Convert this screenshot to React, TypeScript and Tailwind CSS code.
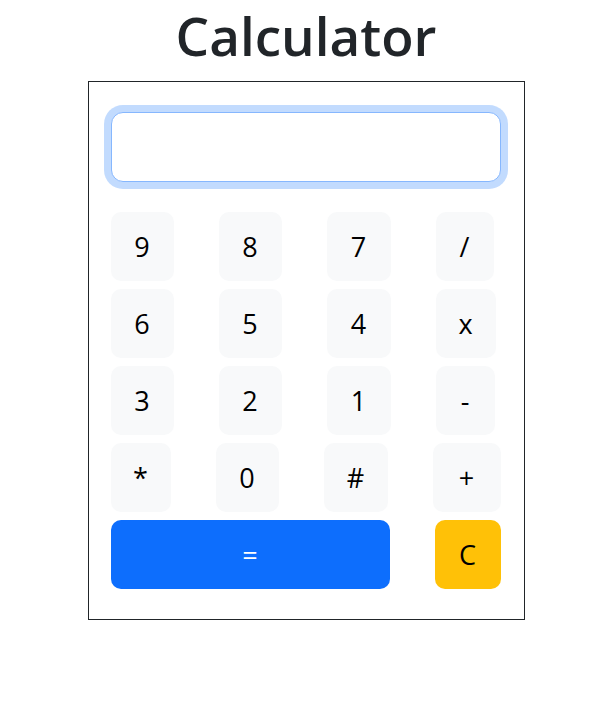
const rows: { label: string; ml: number; w: number; kind?: "blue" | "yellow" }[][] = [
  [
    { label: "9", ml: 0, w: 63 },
    { label: "8", ml: 45, w: 63 },
    { label: "7", ml: 45, w: 64 },
    { label: "/", ml: 45, w: 58 },
  ],
  [
    { label: "6", ml: 0, w: 63 },
    { label: "5", ml: 45, w: 63 },
    { label: "4", ml: 45, w: 64 },
    { label: "x", ml: 45, w: 60 },
  ],
  [
    { label: "3", ml: 0, w: 63 },
    { label: "2", ml: 45, w: 63 },
    { label: "1", ml: 45, w: 64 },
    { label: "-", ml: 45, w: 59 },
  ],
  [
    { label: "*", ml: 0, w: 60 },
    { label: "0", ml: 45, w: 63 },
    { label: "#", ml: 45, w: 64 },
    { label: "+", ml: 45, w: 68 },
  ],
  [
    { label: "=", ml: 0, w: 279, kind: "blue" },
    { label: "C", ml: 45, w: 66, kind: "yellow" },
  ],
];

const mlClass: Record<number, string> = {
  0: "ml-0",
  45: "ml-[45px]",
};

const wClass: Record<number, string> = {
  58: "w-[58px]",
  59: "w-[59px]",
  60: "w-[60px]",
  63: "w-[63px]",
  64: "w-[64px]",
  66: "w-[66px]",
  68: "w-[68px]",
  279: "w-[279px]",
};

export default function App() {
  return (
    <div className="flex min-h-[716px] flex-col items-center bg-white font-['Open_Sans',sans-serif]">
      <h1 className="mt-0 mb-[10px] text-[53px] font-semibold leading-[71px] text-[#212529]">
        Calculator
      </h1>
      <div className="w-[437px] border border-[#212529] px-[22px] pt-[30px] pb-[30px]">
        <input
          type="text"
          className="block h-[70px] w-[390px] rounded-[12px] border border-[#86b7fe] bg-white px-4 text-2xl shadow-[0_0_0_7px_rgba(13,110,253,0.25)] outline-none"
        />
        <div className="mt-[30px] flex flex-col gap-[8px]">
          {rows.map((row, i) => (
            <div key={i} className="flex">
              {row.map((b) => (
                <button
                  key={b.label}
                  className={[
                    "flex h-[69px] items-center justify-center rounded-[10px] pt-[2px] text-[27px]",
                    mlClass[b.ml],
                    wClass[b.w],
                    b.kind === "blue"
                      ? "bg-[#0d6efd] text-white"
                      : b.kind === "yellow"
                        ? "bg-[#ffc107] text-black"
                        : "bg-[#f8f9fa] text-black",
                  ].join(" ")}
                >
                  {b.label}
                </button>
              ))}
            </div>
          ))}
        </div>
      </div>
    </div>
  );
}
